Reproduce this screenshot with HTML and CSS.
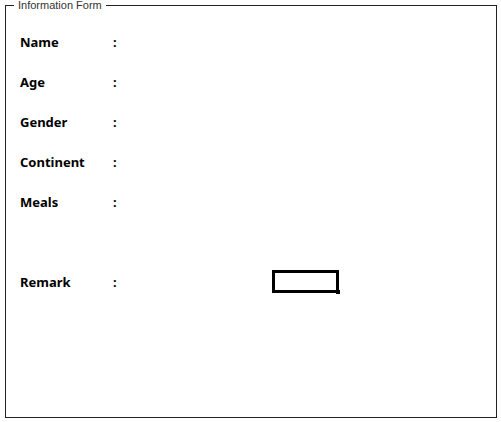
FILE: index.html
```html
<!DOCTYPE html>
<html>
<head>
<meta charset="utf-8">
<link rel="stylesheet" href="styles.css">
</head>
<body>
<fieldset class="form">
  <legend class="form-title">Information Form</legend>
  <div class="row"><span class="label">Name</span><span class="colon">:</span></div>
  <div class="row"><span class="label">Age</span><span class="colon">:</span></div>
  <div class="row"><span class="label">Gender</span><span class="colon">:</span></div>
  <div class="row"><span class="label">Continent</span><span class="colon">:</span></div>
  <div class="row"><span class="label">Meals</span><span class="colon">:</span></div>
  <div class="row"></div>
  <div class="row"><span class="label">Remark</span><span class="colon">:</span><span class="remark-box"><span class="grip"></span></span></div>
</fieldset>
</body>
</html>
```
FILE: styles.css
```css
html, body {
  margin: 0;
  padding: 0;
  background: #fff;
}
body {
  font-family: "Noto Sans", "DejaVu Sans", sans-serif;
}
.form {
  box-sizing: border-box;
  width: 492px;
  height: 419px;
  margin: -1px 0 0 5px;
  padding: 11px 0 0 0;
  border: 1px solid #222;
}
.form-title {
  font-family: "Liberation Sans", Arial, sans-serif;
  font-size: 11px;
  line-height: 12px;
  color: #333;
  padding: 0 4px 0 4px;
  margin-left: 8px;
}
.row {
  display: grid;
  grid-template-columns: 93px 159px auto;
  align-items: center;
  height: 40px;
  padding-left: 14px;
  font-size: 13px;
  font-weight: bold;
  color: #000;
}
.remark-box {
  position: relative;
  box-sizing: border-box;
  width: 67px;
  height: 23px;
  margin-bottom: 2px;
  border: 3px solid #000;
}
.grip {
  position: absolute;
  right: -4px;
  bottom: -4px;
  width: 4px;
  height: 4px;
  background: #000;
}
```
